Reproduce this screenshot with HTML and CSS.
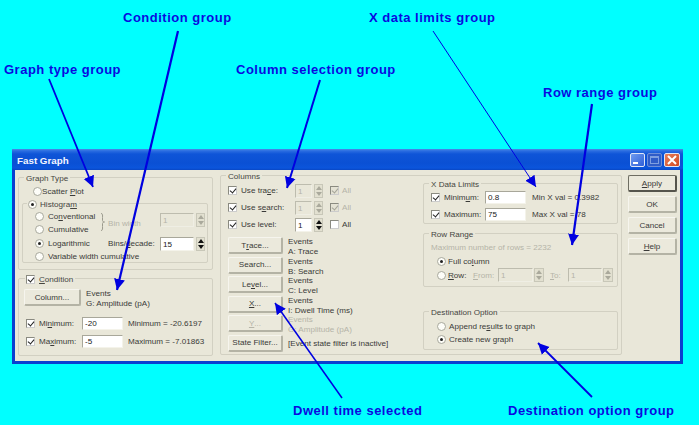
FILE: index.html
```html
<!DOCTYPE html>
<html lang="en">
<head>
<meta charset="utf-8">
<title>Fast Graph</title>
<link rel="stylesheet" href="styles.css">
</head>
<body>
<main class="stage">
  <section class="window">
    <header class="titlebar">
      <span class="title">Fast Graph</span>
      <div class="wincontrols">
        <span class="wbtn wmin"><svg width="15" height="14" viewBox="0 0 15 14"><rect x="3" y="9" width="5" height="2" fill="#fff"/></svg></span>
        <span class="wbtn wmax"><svg width="15" height="14" viewBox="0 0 15 14"><rect x="3.5" y="3.5" width="8" height="7" fill="none" stroke="#7f9fe0"/><rect x="3" y="3" width="9" height="2" fill="#7f9fe0"/></svg></span>
        <span class="wbtn wclose"><svg width="16" height="14" viewBox="0 0 16 14"><path d="M4 3l8 8M12 3l-8 8" stroke="#fff" stroke-width="2"/></svg></span>
      </div>
    </header>
    <div class="dialog">
      <div class="leftcol">
        <div class="group graphtype">
          <div class="legend">Graph Type</div>
          <div class="row radio-outer"><i class="radio"></i><span>Scatter <u>P</u>lot</span></div>
          <div class="group histogram">
            <div class="legend legend-hist"><i class="radio on"></i><span>Histogra<u>m</u></span></div>
            <div class="histgrid">
              <div class="row cell-a"><i class="radio"></i><span>Co<u>n</u>ventional</span></div>
              <div class="row cell-b"><i class="radio"></i><span>Cumulative</span></div>
              <div class="row cell-c"><i class="radio on"></i><span>Logarithmic</span></div>
              <div class="row cell-d"><i class="radio"></i><span>Variable width cumulative</span></div>
              <div class="binwidth">
                <svg class="brace" width="4" height="18" viewBox="0 0 4 18"><path d="M0 .5c2 0 1.500 2 1.500 4v3c0 1 1 1.500 2 1.500-1 0-2 .5-2 1.500v3c0 2 .5 4-1.500 4" fill="none" stroke="#9c9b8e"/></svg>
                <span class="lbl-bin disabled">Bin width</span>
                <span class="input w34 off">1</span>
                <span class="spin off"><b class="up"></b><b class="down"></b></span>
              </div>
              <div class="bins">
                <span class="lbl-bins">Bins/<u>d</u>ecade:</span>
                <span class="input w34">15</span>
                <span class="spin"><b class="up"></b><b class="down"></b></span>
              </div>
            </div>
          </div>
        </div>
        <div class="group condition">
          <div class="legend legend-check"><i class="check on"></i><span><u>C</u>ondition</span></div>
          <div class="colrow cond-col">
            <span class="btn w57">Column...</span>
            <div class="twoline"><div>Events</div><div>G: Amplitude (pA)</div></div>
          </div>
          <div class="limrows cond-rows">
            <div class="row lim"><i class="check on"></i><span class="lbl43">Mi<u>n</u>imum:</span><span class="input w41">-20</span><span class="note">Minimum = -20.6197</span></div>
            <div class="row lim"><i class="check on"></i><span class="lbl43">Ma<u>x</u>imum:</span><span class="input w41">-5</span><span class="note">Maximum = -7.01863</span></div>
          </div>
        </div>
      </div>

      <div class="group columns">
        <div class="legend">Columns</div>
        <div class="colbody">
          <div class="colleft">
            <div class="row use"><i class="check on"></i><span class="lbl54">Use tra<u>c</u>e:</span><span class="input w17 off">1</span><span class="spin off"><b class="up"></b><b class="down"></b></span><i class="check on off all"></i><span class="disabled">All</span></div>
            <div class="row use"><i class="check on"></i><span class="lbl54">Use s<u>e</u>arch:</span><span class="input w17 off">1</span><span class="spin off"><b class="up"></b><b class="down"></b></span><i class="check on off all"></i><span class="disabled">All</span></div>
            <div class="row use"><i class="check on"></i><span class="lbl54">Use level:</span><span class="input w17">1</span><span class="spin"><b class="up"></b><b class="down"></b></span><i class="check all"></i><span>All</span></div>
            <div class="sellist">
              <div class="colrow"><span class="btn w55">T<u>r</u>ace...</span><div class="twoline"><div>Events</div><div>A: Trace</div></div></div>
              <div class="colrow"><span class="btn w55">Search...</span><div class="twoline"><div>Events</div><div>B: Search</div></div></div>
              <div class="colrow"><span class="btn w55">Le<u>v</u>el...</span><div class="twoline"><div>Events</div><div>C: Level</div></div></div>
              <div class="colrow"><span class="btn w55"><u>X</u>...</span><div class="twoline"><div>Events</div><div>I: Dwell Time (ms)</div></div></div>
              <div class="colrow"><span class="btn w55 disabled"><u>Y</u>...</span><div class="twoline disabled"><div>Events</div><div>G: Amplitude (pA)</div></div></div>
              <div class="colrow center"><span class="btn w55">State Filter...</span><div>[Event state filter is inactive]</div></div>
            </div>
          </div>
          <div class="colright">
            <div class="group xlimits">
              <div class="legend">X Data Limits</div>
              <div class="row xlim"><i class="check on"></i><span class="lbl41">Minim<u>u</u>m:</span><span class="input w41">0.8</span><span class="note2">Min X val = 0.3982</span></div>
              <div class="row xlim"><i class="check on"></i><span class="lbl41">Maximum:</span><span class="input w41">75</span><span class="note2">Max X val = 78</span></div>
            </div>
            <div class="group rowrange">
              <div class="legend">Row Range</div>
              <div class="maxrows disabled">Maximum number of rows = 2232</div>
              <div class="row opt"><i class="radio on"></i><span>Full co<u>l</u>umn</span></div>
              <div class="row opt">
                <i class="radio"></i><span class="lbl25"><u>R</u>ow:</span>
                <span class="lbl25 disabled"><u>F</u>rom:</span>
                <span class="input w35 off">1</span><span class="spin s10 off"><b class="up"></b><b class="down"></b></span>
                <span class="lbl-to disabled"><u>T</u>o:</span>
                <span class="input w34 off">1</span><span class="spin s10 off"><b class="up"></b><b class="down"></b></span>
              </div>
            </div>
            <div class="group destination">
              <div class="legend">Destination Option</div>
              <div class="row dest"><i class="radio"></i><span>Append re<u>s</u>ults to graph</span></div>
              <div class="row dest"><i class="radio on"></i><span>Create new graph</span></div>
            </div>
          </div>
        </div>
      </div>

      <div class="actions">
        <span class="btn default"><u>A</u>pply</span>
        <span class="btn">OK</span>
        <span class="btn">Cancel</span>
        <span class="btn"><u>H</u>elp</span>
      </div>
    </div>
  </section>

  <svg class="arrows" width="699" height="425" viewBox="0 0 699 425">
    <defs>
      <marker id="head" markerUnits="userSpaceOnUse" markerWidth="12" markerHeight="12" refX="11" refY="6" orient="auto">
        <path d="M0 .5L11 6L0 11.500Z" fill="#0000e0"/>
      </marker>
    </defs>
    <g fill="none" stroke="#0000e0">
      <line x1="49" y1="79" x2="93" y2="187" stroke-width="1.800" marker-end="url(#head)"/>
      <line x1="178" y1="31" x2="117" y2="290" stroke-width="2.200" marker-end="url(#head)"/>
      <line x1="320" y1="80" x2="287" y2="188" stroke-width="2" marker-end="url(#head)"/>
      <line x1="433" y1="31" x2="536" y2="187" stroke-width="1" marker-end="url(#head)"/>
      <line x1="592" y1="104" x2="572" y2="245" stroke-width="2.200" marker-end="url(#head)"/>
      <line x1="592" y1="397" x2="538" y2="343" stroke-width="1.800" marker-end="url(#head)"/>
      <line x1="342" y1="398" x2="275" y2="303" stroke-width="1.500" marker-end="url(#head)"/>
    </g>
  </svg>

  <span class="note-label n-condition">Condition group</span>
  <span class="note-label n-graph">Graph type group</span>
  <span class="note-label n-column">Column selection group</span>
  <span class="note-label n-xlimits">X data limits group</span>
  <span class="note-label n-row">Row range group</span>
  <span class="note-label n-dwell">Dwell time selected</span>
  <span class="note-label n-dest">Destination option group</span>
</main>
</body>
</html>
```

FILE: styles.css
```css
* { box-sizing: border-box; }
html, body { margin: 0; padding: 0; background: #00ffff; }
.stage {
  position: relative;
  width: 699px;
  height: 425px;
  overflow: hidden;
  background: #00ffff;
  font-family: "Liberation Sans", Arial, sans-serif;
}

/* Window */
.window {
  position: absolute;
  left: 12px;
  top: 149px;
  width: 671px;
  height: 215px;
  display: flex;
  flex-direction: column;
  background: #0a3fd0;
  border-radius: 2px 2px 0 0;
}
.titlebar {
  height: 21px;
  flex: none;
  display: flex;
  align-items: center;
  justify-content: space-between;
  padding: 1px 3px 0 5px;
  background: linear-gradient(#4a8ae8 0, #2a6ce0 2px, #0f55d8 5px, #0a50d4 14px, #0b55dc 19px, #0846c4 21px);
}
.title { color: #f2f5ff; font-size: 9.8px; font-weight: bold; }
.wincontrols { display: flex; gap: 2px; }
.wbtn {
  width: 15px;
  height: 14px;
  display: block;
  border: 1px solid #dfe6f6;
  border-radius: 2px;
  overflow: hidden;
}
.wbtn svg { display: block; margin: -1px; }
.wmin { background: linear-gradient(135deg, #6f9cf0, #2f5fd8); }
.wmax { background: #2f5cc8; border-color: #6f8fd8; }
.wclose { width: 16px; background: linear-gradient(135deg, #e8805c, #d04820); }

.dialog {
  flex: 1;
  margin: 0 3px 3px;
  padding: 5px 3px 0;
  display: flex;
  align-items: flex-start;
  background: #e9e7d9;
  font-size: 8.1px;
  line-height: 11px;
  color: #3a3a38;
  gap: 7px;
}
.leftcol { width: 195px; flex: none; display: flex; flex-direction: column; padding-top: 2px; gap: 8px; }

/* Groups */
.group { position: relative; border: 1px solid #d2d0c2; border-radius: 2px; }
.legend {
  display: flex;
  align-items: center;
  width: fit-content;
  height: 11px;
  margin: -5px 0 -1px 5px;
  padding: 0 2px;
  background: #e9e7d9;
  color: #45453f;
}
.row { display: flex; align-items: center; }
.disabled { color: #b5b4a8; }
u { text-underline-offset: 1px; }

/* Controls */
.radio {
  display: block;
  flex: none;
  width: 9px;
  height: 9px;
  border-radius: 50%;
  border: 1px solid #a8a89c;
  background: #fdfdf8;
  position: relative;
}
.radio.on::after {
  content: "";
  position: absolute;
  left: 2px;
  top: 2px;
  width: 3px;
  height: 3px;
  border-radius: 50%;
  background: #222;
}
.check {
  display: block;
  flex: none;
  width: 9px;
  height: 9px;
  border: 1px solid #8a8a80;
  border-right-color: #ccc;
  border-bottom-color: #ccc;
  background: #fff;
  position: relative;
}
.check.on::after {
  content: "";
  position: absolute;
  left: 2px;
  top: 0;
  width: 3px;
  height: 5px;
  border: solid #222;
  border-width: 0 1.500px 1.500px 0;
  transform: rotate(40deg);
}
.check.off { background: #e4e2d4; }
.check.off::after { border-color: #a4a498; }
.input {
  display: block;
  flex: none;
  height: 14px;
  padding: 1px 0 0 2px;
  background: #fff;
  border: 1px solid #a8a79a;
  border-right-color: #f4f3ea;
  border-bottom-color: #f4f3ea;
  color: #222;
}
.input.off { background: #e9e7d9; color: #b5b4a8; border-color: #bdbcae; border-right-color: #efeee4; border-bottom-color: #efeee4; }
.w17 { width: 17px; }
.w34 { width: 34px; }
.w35 { width: 35px; }
.w41 { width: 41px; }
.spin {
  display: flex;
  flex-direction: column;
  flex: none;
  width: 9px;
  height: 14px;
  margin-left: 2px;
  background: #e2e0d0;
  border: 1px solid #c8c7b8;
}
.spin.s10 { width: 10px; margin-left: 1px; }
.spin b { flex: 1; display: flex; align-items: center; justify-content: center; }
.spin b::after { content: ""; border-left: 3px solid transparent; border-right: 3px solid transparent; }
.spin .up::after { border-bottom: 4px solid #111; }
.spin .down::after { border-top: 4px solid #111; }
.spin.off .up::after { border-bottom-color: #aaa99c; }
.spin.off .down::after { border-top-color: #aaa99c; }
.btn {
  display: flex;
  align-items: center;
  justify-content: center;
  flex: none;
  height: 17px;
  background: #ebe9dc;
  border: 1px solid #f6f5ee;
  border-right: 2px solid #b4b3a5;
  border-bottom: 2px solid #b4b3a5;
  border-radius: 2px;
  color: #3a3a38;
}
.btn.disabled { color: #b5b4a8; }
.w55 { width: 55px; }
.w57 { width: 57px; }

/* Graph type */
.graphtype { height: 93px; }
.radio-outer { height: 13px; margin: 2px 0 0 14px; }
.radio-outer span { margin-left: 0; }
.histogram { margin: 5px 4px 0 3px; height: 60px; }
.legend-hist { margin-left: 4px; gap: 3px; padding: 0 2px 0 1px; }
.histgrid {
  display: grid;
  grid-template-columns: 66px 1fr;
  grid-template-rows: 13.300px 13.300px 13.300px 13.300px;
  padding-left: 12px;
  padding-top: 1px;
}
.histgrid .row span { margin-left: 4px; }
.cell-a { grid-area: 1 / 1; }
.cell-b { grid-area: 2 / 1; }
.cell-c { grid-area: 3 / 1; }
.cell-d { grid-area: 4 / 1 / 5 / 3; }
.binwidth { grid-area: 1 / 2 / 3 / 3; display: flex; align-items: flex-start; padding-top: 3px; }
.brace { flex: none; margin-right: 3px; }
.lbl-bin { width: 52px; padding-top: 5px; }
.bins { grid-area: 3 / 2; display: flex; align-items: center; padding-left: 7px; height: 14px; }
.lbl-bins { width: 52px; }

/* Condition */
.condition { height: 78px; }
.legend-check { margin-left: 6px; gap: 4px; padding: 0 2px 0 1px; }
.colrow { display: flex; align-items: flex-start; gap: 5px; height: 17px; }
.colrow.center { align-items: center; }
.cond-col { margin: 5px 0 0 5px; }
.twoline { line-height: 10px; }
.cond-rows { margin-top: 8px; }
.lim { height: 18px; padding-left: 7px; }
.lbl43 { width: 43px; margin-left: 4px; }
.input.w41 { height: 13px; padding-top: 0; }
.note { margin-left: 5px; }

/* Columns */
.columns { width: 402px; height: 180px; flex: none; }
.colbody { display: flex; align-items: flex-start; margin-top: 1px; }
.colleft { width: 202px; flex: none; padding-left: 7px; }
.use { height: 17px; }
.lbl54 { width: 54px; margin-left: 4px; }
.use .all { margin: 0 3px 0 7px; }
.sellist { display: flex; flex-direction: column; gap: 2.600px; margin-top: 4px; }
.colright { width: 195px; flex: none; margin-top: 1px; display: flex; flex-direction: column; }
.xlimits { height: 41px; }
.xlim { height: 17px; padding-left: 7px; }
.lbl41 { width: 41px; margin-left: 4px; }
.note2 { margin-left: 6px; }
.rowrange { height: 54px; margin-top: 9px; }
.maxrows { height: 13px; margin: 2px 0 0 7px; line-height: 13px; }
.opt { height: 14px; padding-left: 13px; }
.opt:first-of-type { margin-top: 1px; }
.opt .radio { margin-right: 2px; }
.lbl25 { width: 25px; }
.lbl-to { width: 18px; margin-left: 6px; }
.destination { height: 39px; margin-top: 24px; }
.dest { height: 13px; padding-left: 13px; }
.destination .legend { margin-bottom: 2px; }
.dest span { margin-left: 3px; }

/* Action buttons */
.actions { width: 49px; flex: none; display: flex; flex-direction: column; gap: 4px; margin-left: -1px; }
.actions .btn { height: 17px; }
.btn.default { border: 1px solid #6e6d62; border-right: 2px solid #55544c; border-bottom: 2px solid #55544c; }

/* Annotations */
.arrows { position: absolute; left: 0; top: 0; pointer-events: none; }
.note-label {
  position: absolute;
  font-size: 13px;
  line-height: 15px;
  font-weight: bold;
  letter-spacing: .5px;
  color: #0a0ae0;
  white-space: nowrap;
}
.n-condition { left: 123px; top: 10px; }
.n-graph { left: 4px; top: 62px; }
.n-column { left: 236px; top: 62px; }
.n-xlimits { left: 369px; top: 10px; }
.n-row { left: 543px; top: 85px; }
.n-dwell { left: 293px; top: 403px; }
.n-dest { left: 508px; top: 403px; }
```
